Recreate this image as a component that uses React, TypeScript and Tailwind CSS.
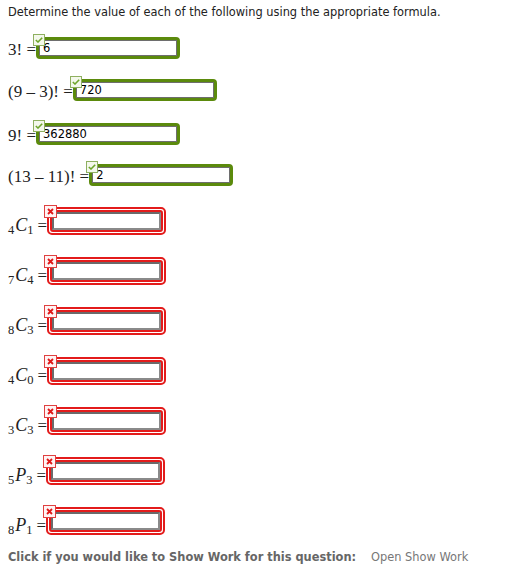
import React from "react";

const verdana = { fontFamily: "'DejaVu Sans', Verdana, sans-serif" };

function Check() {
  return (
    <div className="absolute left-[-6px] top-[-6px] w-[12px] h-[12px] border border-[#8fb060] bg-[#f4f8ec] flex items-center justify-center z-10">
      <svg width="8" height="6" viewBox="0 0 8 6">
        <path d="M0.8 3 L3 5 L7.2 0.8" fill="none" stroke="#6ea52c" strokeWidth="1.6" />
      </svg>
    </div>
  );
}

function Cross() {
  return (
    <div className="absolute left-[-5px] top-[-4px] w-[13px] h-[13px] border border-[#e04040] bg-[#fff4f4] flex items-center justify-center z-10">
      <svg width="7" height="7" viewBox="0 0 7 7">
        <path d="M1 1 L6 6 M6 1 L1 6" fill="none" stroke="#e01818" strokeWidth="1.8" />
      </svg>
    </div>
  );
}

function GreenBox({ value }: { value: string }) {
  return (
    <div className="relative w-[144px] h-[22px] border-[3px] border-[#5b8a0c] rounded-[4px] bg-white">
      <Check />
      <div className="h-full border border-[#6e6e6e] pl-[3px] text-[11.5px] leading-[15px] text-black" style={verdana}>
        {value}
      </div>
    </div>
  );
}

function RedBox() {
  return (
    <div className="relative w-[119px] h-[28px] shrink-0 border-2 border-[#e31b1b] rounded-[5px] p-[1px] bg-white">
      <Cross />
      <div className="h-full border-2 border-[#e31b1b] rounded-[3px]">
        <div className="h-full border-2 border-t-[#6a6a6a] border-l-[#6a6a6a] border-b-[#8a8a8a] border-r-[#8a8a8a] bg-white" />
      </div>
    </div>
  );
}

const serif = { fontFamily: "'Liberation Serif', 'Times New Roman', serif" };

function GreenRow({ children, value, mt }: { children: React.ReactNode; value: string; mt: string }) {
  return (
    <div className={`flex items-end ${mt}`}>
      <span className="text-[17px] leading-none text-[#222] pb-[1px] whitespace-pre" style={serif}>
        {children}
      </span>
      <GreenBox value={value} />
    </div>
  );
}

function RedRow({ n, l, r }: { n: string; l: string; r: string }) {
  return (
    <div className="flex items-end mt-[22px]">
      <span className="text-[17px] leading-none text-[#222] pb-[1px] whitespace-pre flex items-baseline" style={serif}>
        <span className="text-[12.5px] relative top-[3px]">{n}</span>
        <span className="italic text-[18px] ml-[1px]">{l}</span>
        <span className="text-[12.5px] relative top-[3px]">{r}</span>
        <span className="ml-[4px]">=</span>
      </span>
      <RedBox />
    </div>
  );
}

export default function App() {
  return (
    <div className="w-[507px] h-[572px] bg-white pl-[8px] pt-[5px]">
      <div className="text-[11.4px] leading-[14px] text-[#222]" style={verdana}>
        Determine the value of each of the following using the appropriate formula.
      </div>
      <div className="mt-[18px]">
        <GreenRow value="6" mt="">3! =</GreenRow>
        <GreenRow value="720" mt="mt-[20px]">(9 – 3)! =</GreenRow>
        <GreenRow value="362880" mt="mt-[22px]">9! =</GreenRow>
        <GreenRow value="2" mt="mt-[19px]">(13 – 11)! =</GreenRow>
      </div>
      <div className="-mt-[1px]">
        <RedRow n="4" l="C" r="1" />
        <RedRow n="7" l="C" r="4" />
        <RedRow n="8" l="C" r="3" />
        <RedRow n="4" l="C" r="0" />
        <RedRow n="3" l="C" r="3" />
        <RedRow n="5" l="P" r="3" />
        <RedRow n="8" l="P" r="1" />
      </div>
      <div className="mt-[15px] flex text-[11.4px] leading-[14px]" style={verdana}>
        <span className="font-bold text-[#666]">Click if you would like to Show Work for this question:</span>
        <span className="ml-[15px] text-[#777]">Open Show Work</span>
      </div>
    </div>
  );
}
